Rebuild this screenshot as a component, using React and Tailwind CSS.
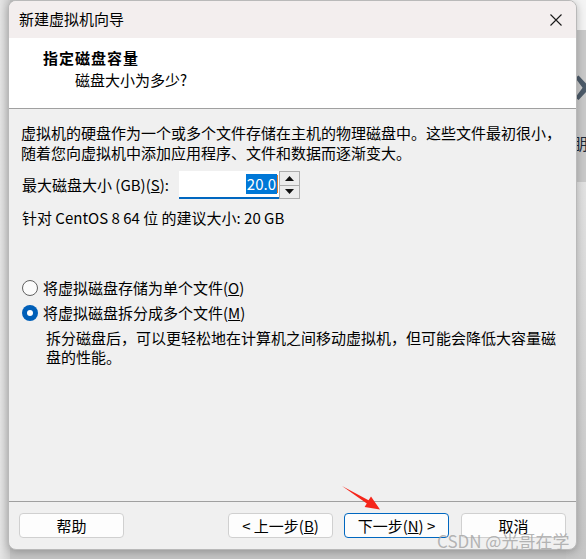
import React from "react";

const font = "font-['Noto_Sans_CJK_SC','Noto_Sans',sans-serif]";

function Radio({ checked }) {
  return checked ? (
    <span className="w-[16px] h-[16px] rounded-full bg-[#005fb8] flex items-center justify-center shrink-0">
      <span className="w-[6px] h-[6px] rounded-full bg-white" />
    </span>
  ) : (
    <span className="w-[16px] h-[16px] rounded-full border border-[#616161] bg-[#fbfbfb] shrink-0" />
  );
}

function Btn({ children, focused }) {
  return (
    <button
      className={
        focused
          ? "w-[105px] h-[25px] rounded-[4px] bg-[#fdfdfd] border border-[#0067c0] text-[15px] leading-none text-black"
          : "w-[105px] h-[25px] rounded-[4px] bg-[#fdfdfd] border border-[#d0d0d0] text-[15px] leading-none text-black"
      }
    >
      {children}
    </button>
  );
}

export default function App() {
  return (
    <div className={`relative w-[586px] h-[559px] overflow-hidden bg-[#c4c4c4] ${font}`}>
      {/* desktop behind the dialog */}
      <div className="absolute right-0 top-0 w-[20px] h-[30px] bg-[#f4f4f4]" />
      <div className="absolute right-0 top-[30px] w-[20px] h-[152px] bg-[#c9c9c9]" />
      <div className="absolute right-0 top-[182px] w-[20px] h-[377px] bg-gradient-to-b from-[#e2e2e2] to-[#c6c6c6]" />
      <div className="absolute left-[572px] top-[52px] text-[56px] leading-none text-[#4b5a68] font-bold">»</div>
      <div className="absolute left-[572px] top-[135px] text-[16px] leading-none text-[#1d2a3a]">朋</div>
      <div className="absolute left-0 top-0 w-[10px] h-[559px] bg-gradient-to-r from-[#e4e4e4] to-[#d0d0d0]" />

      <div className="relative ml-[8px] w-[569px] h-[550px] rounded-[8px] overflow-hidden border border-[#b9b9b9] shadow-[0_2px_8px_rgba(0,0,0,0.25)] flex flex-col bg-[#f0f0f0]">
        {/* title bar */}
        <div className="h-[37px] shrink-0 bg-[#f3eeee] flex items-center justify-between pl-[10px] pr-[14px]">
          <span className="text-[15px] text-black">新建虚拟机向导</span>
          <svg width="12" height="12" viewBox="0 0 12 12">
            <path d="M0.5 0.5 L11.5 11.5 M11.5 0.5 L0.5 11.5" stroke="#1a1a1a" strokeWidth="1.1" />
          </svg>
        </div>

        {/* header */}
        <div className="h-[71px] shrink-0 bg-white border-b border-[#a0a0a0] pt-[9px]">
          <div className="pl-[34px] text-[15px] leading-[22px] font-bold tracking-[1px] text-black">指定磁盘容量</div>
          <div className="pl-[66px] text-[15px] leading-[22px] text-black">磁盘大小为多少?</div>
        </div>

        {/* body */}
        <div className="h-[393px] shrink-0 border-b border-[#a0a0a0] pl-[12px] pt-[14px] text-[15px] text-black">
          <div className="leading-[20px] whitespace-nowrap">
            虚拟机的硬盘作为一个或多个文件存储在主机的物理磁盘中。这些文件最初很小，
            <br />
            随着您向虚拟机中添加应用程序、文件和数据而逐渐变大。
          </div>

          <div className="mt-[8px] flex items-center h-[28px]">
            <span className="w-[158px] pl-[1px] whitespace-nowrap">
              最大磁盘大小 (GB)(<span className="underline">S</span>):
            </span>
            <div className="w-[100px] h-[28px] bg-white border-b-2 border-[#0067c0] flex items-center justify-end pr-[1px]">
              <span className="bg-[#0078d7] text-white leading-[20px] px-[1px]">20.0</span>
              <span className="w-[1px] h-[18px] bg-[#e07a2c]" />
            </div>
            <div className="w-[21px] h-[28px] flex flex-col border border-[#adadad] bg-[#ececec]">
              <div className="flex-1 flex items-center justify-center border-b border-[#adadad]">
                <svg width="9" height="5" viewBox="0 0 9 5"><path d="M0 5 L4.5 0 L9 5 Z" fill="#111" /></svg>
              </div>
              <div className="flex-1 flex items-center justify-center">
                <svg width="9" height="5" viewBox="0 0 9 5"><path d="M0 0 L4.5 5 L9 0 Z" fill="#111" /></svg>
              </div>
            </div>
          </div>

          <div className="mt-[9px] leading-[20px] pl-[1px] whitespace-nowrap">
            针对 CentOS 8 64 位 的建议大小: 20 GB
          </div>

          <div className="mt-[50px] flex items-center gap-[5px] h-[20px] pl-[1px]">
            <Radio />
            <span>
              将虚拟磁盘存储为单个文件(<span className="underline">O</span>)
            </span>
          </div>
          <div className="mt-[5px] flex items-center gap-[5px] h-[20px] pl-[1px]">
            <Radio checked />
            <span>
              将虚拟磁盘拆分成多个文件(<span className="underline">M</span>)
            </span>
          </div>
          <div className="mt-[5px] pl-[25px] leading-[19px] whitespace-nowrap">
            拆分磁盘后，可以更轻松地在计算机之间移动虚拟机，但可能会降低大容量磁
            <br />
            盘的性能。
          </div>
        </div>

        {/* footer */}
        <div className="flex-1 flex items-start pt-[11px] pl-[10px] pr-[10px]">
          <Btn>帮助</Btn>
          <div className="ml-auto flex gap-[11px]">
            <Btn>
              &lt; 上一步(<span className="underline">B</span>)
            </Btn>
            <Btn focused>
              下一步(<span className="underline">N</span>) &gt;
            </Btn>
            <div className="ml-[1px]">
              <Btn>取消</Btn>
            </div>
          </div>
        </div>
      </div>

      {/* annotation arrow */}
      <svg className="absolute left-0 top-0 pointer-events-none" width="586" height="559" viewBox="0 0 586 559">
        <polygon points="342,486 368.5,500.2 371,496.4 380,509.5 364.6,507 366.8,503.4" fill="#f5261b" />
      </svg>

      {/* watermark */}
      <div className="absolute left-[437px] top-[529px] text-[17px] leading-[24px] text-[#a3a3a3]/80 whitespace-nowrap pointer-events-none">
        CSDN @光哥在学
      </div>
    </div>
  );
}
